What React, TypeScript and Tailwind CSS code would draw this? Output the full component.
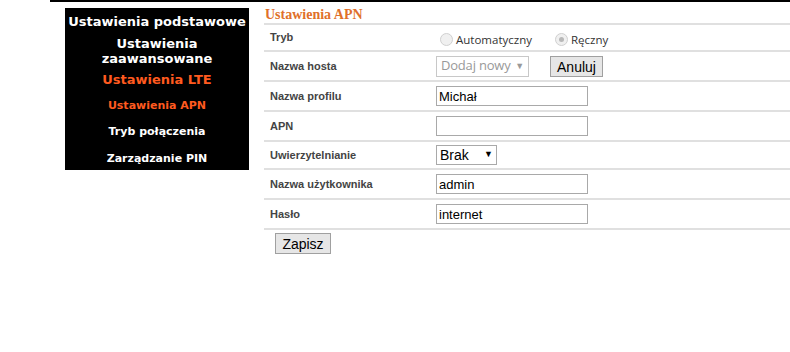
import { useState } from 'react'

const rows = [
  { label: 'Nazwa profilu', value: 'Michał' },
  { label: 'APN', value: '' },
]

function Row({ label, h = 'h-[30px]', children }: { label: string; h?: string; children?: React.ReactNode }) {
  return (
    <div className={`flex ${h} items-center border-t-2 border-[#e0e0e0]`}>
      <div className="w-[172px] pl-[6px] text-[11px] font-bold text-[#444]">{label}</div>
      <div className="flex items-center">{children}</div>
    </div>
  )
}

function TextInput({ value }: { value: string }) {
  const [v, setV] = useState(value)
  return (
    <input
      value={v}
      onChange={(e) => setV(e.target.value)}
      className="h-[20px] w-[152px] border border-[#a9a9a9] bg-white px-[2px] text-[13px] text-black outline-none"
    />
  )
}

function Caret() {
  return <span className="text-[9px]">▼</span>
}

export default function App() {
  return (
    <div className="relative h-[352px] w-[790px] bg-white font-['Liberation_Sans',Arial,sans-serif]">
      <div className="ml-[50px] h-[2px] bg-black" />
      <div className="flex pt-[6px]">
        <nav className="ml-[65px] flex h-[162px] w-[184px] flex-col items-center bg-black pt-[6px] text-center font-['DejaVu_Sans',Verdana,sans-serif] font-bold">
          <a className="text-[13px] leading-[16px] text-white">Ustawienia podstawowe</a>
          <a className="mt-[6px] text-[13px] leading-[15px] text-white">
            Ustawienia
            <br />
            zaawansowane
          </a>
          <a className="mt-[6px] text-[13px] leading-[16px] text-[#ff5a1f]">Ustawienia LTE</a>
          <a className="mt-[11px] text-[11px] leading-[14px] text-[#ff5a1f]">Ustawienia APN</a>
          <a className="mt-[12px] text-[11px] leading-[14px] text-white">Tryb połączenia</a>
          <a className="mt-[13px] text-[11px] leading-[14px] text-white">Zarządzanie PIN</a>
        </nav>
        <main className="ml-[15px] flex-1">
          <h1 className="pl-[1px] font-['Liberation_Serif',serif] text-[14px] leading-[14px] font-bold text-[#e0702a]">
            Ustawienia APN
          </h1>
          <div className="mt-[1px]">
            <div className="flex h-[27px] items-center border-t-2 border-[#e0e0e0]">
              <div className="w-[172px] pl-[6px] text-[11px] font-bold text-[#444]">Tryb</div>
              <div className="flex items-center pt-[4px] font-['Open_Sans',sans-serif] text-[11.5px] text-[#333]">
                <span className="ml-[4px] h-[13px] w-[13px] rounded-full border border-[#d0d0d0] bg-[#f0f0f0]" />
                <span className="ml-[3px]">Automatyczny</span>
                <span className="ml-[23px] flex h-[13px] w-[13px] items-center justify-center rounded-full border border-[#d0d0d0] bg-[#f0f0f0]">
                  <span className="h-[5px] w-[5px] rounded-full bg-[#b8b8b8]" />
                </span>
                <span className="ml-[3px]">Ręczny</span>
              </div>
            </div>
            <Row label="Nazwa hosta">
              <div className="flex h-[21px] w-[93px] items-center justify-between whitespace-nowrap border border-[#c8c8c8] px-[4px] font-['Open_Sans',sans-serif] text-[13px] tracking-[-0.2px] text-[#999]">
                <span>Dodaj nowy</span>
                <Caret />
              </div>
              <button className="ml-[21px] h-[21px] w-[53px] border border-[#a0a0a0] bg-[#e6e6e6] text-[14px] text-black">
                Anuluj
              </button>
            </Row>
            {rows.map((r) => (
              <Row key={r.label} label={r.label}>
                <TextInput value={r.value} />
              </Row>
            ))}
            <Row label="Uwierzytelnianie" h="h-[28px]">
              <div className="flex h-[20px] w-[61px] items-center justify-between border border-[#a9a9a9] px-[3px] text-[14px] text-black">
                <span>Brak</span>
                <Caret />
              </div>
            </Row>
            <Row label="Nazwa użytkownika">
              <TextInput value="admin" />
            </Row>
            <Row label="Hasło">
              <TextInput value="internet" />
            </Row>
            <div className="border-t-2 border-[#e0e0e0] pl-[11px] pt-[2px]">
              <button className="h-[21px] w-[56px] border border-[#a0a0a0] bg-[#e6e6e6] text-[14px] text-black">
                Zapisz
              </button>
            </div>
          </div>
        </main>
      </div>
    </div>
  )
}
